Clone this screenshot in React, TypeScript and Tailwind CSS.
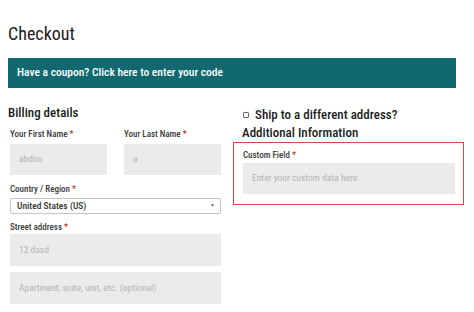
import React from "react";

function Label({ children }: { children: React.ReactNode }) {
  return (
    <div className="text-[9px] leading-[11px] font-medium text-[#3a3a3a]">
      {children} <span className="text-[#c0392b]">*</span>
    </div>
  );
}

function Field({ text, className = "" }: { text: string; className?: string }) {
  return (
    <div className={`bg-[#ebebeb] flex items-center px-[9px] text-[9.5px] text-[#b3b3b3] ${className}`}>
      {text}
    </div>
  );
}

export default function App() {
  return (
    <div className="w-[474px] h-[312px] bg-white overflow-hidden pl-2 pt-[22px] text-[#1c1c1c]" style={{ fontFamily: '"Roboto Condensed", "Liberation Sans", sans-serif' }}>
      <h1 className="text-[18px] leading-[24px] font-normal">Checkout</h1>
      <div className="mt-[12px] w-[448px] h-[30px] bg-[#11696f] flex items-center pl-[9px] text-white text-[11.5px] font-medium">
        Have a coupon? Click here to enter your code
      </div>
      <div className="flex mt-[15px]">
        <div className="w-[217px]">
          <h2 className="text-[13px] leading-[20px] font-medium">Billing details</h2>
          <div className="pl-[2px] mt-[6px]">
            <div className="flex gap-[17px]">
              <div className="w-[97px]">
                <Label>Your First Name</Label>
                <Field text="abdou" className="mt-[4px] h-[31px]" />
              </div>
              <div className="w-[97px]">
                <Label>Your Last Name</Label>
                <Field text="a" className="mt-[4px] h-[31px]" />
              </div>
            </div>
            <div className="mt-[9px]">
              <Label>Country / Region</Label>
              <div className="mt-[3px] w-[211px] h-[16px] border border-[#c4c4c4] rounded-[2px] flex items-center justify-between pl-[6px] pr-[5px] text-[9.5px] font-medium text-[#333]">
                <span>United States (US)</span>
                <span className="text-[5px] text-[#666]">▼</span>
              </div>
            </div>
            <div className="mt-[8px]">
              <Label>Street address</Label>
              <Field text="12 dasd" className="mt-[1px] w-[211px] h-[32px]" />
              <Field text="Apartment, suite, unit, etc. (optional)" className="mt-[6px] w-[211px] h-[32px]" />
            </div>
          </div>
        </div>
        <div className="ml-[8px] w-[231px]">
          <div className="mt-[2px] pl-[10px] flex items-center gap-[6px] text-[13px] leading-[20px] font-medium">
            <span className="w-[6px] h-[6px] border border-[#666] rounded-[1px]" />
            <span>Ship to a different address?</span>
          </div>
          <div className="pl-[9px] text-[13px] leading-[16px] font-medium">Additional Information</div>
          <div className="mt-[1px] border-[1.5px] border-[#cc4f3b] pt-[7px] pl-[9px] pr-[8px] h-[63px]">
            <Label>Custom Field</Label>
            <Field text="Enter your custom data here" className="mt-[2px] w-[212px] h-[31px]" />
          </div>
        </div>
      </div>
    </div>
  );
}
